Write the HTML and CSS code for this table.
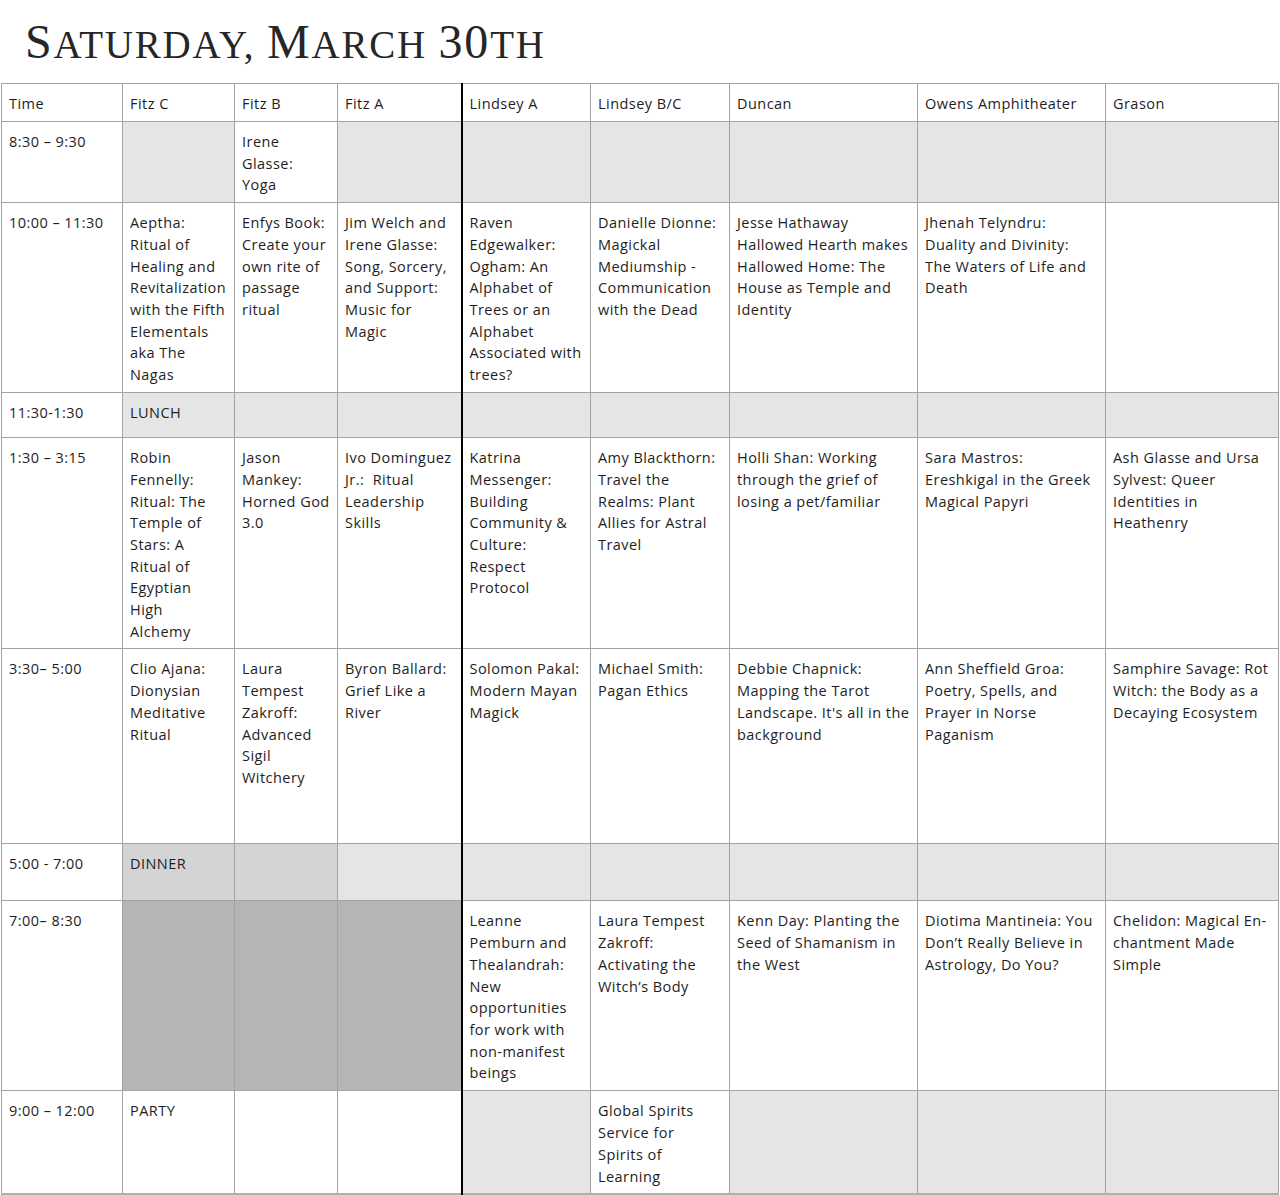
FILE: index.html
```html
<!DOCTYPE html>
<html lang="en">
<head>
<meta charset="utf-8">
<title>Saturday, March 30th</title>
<link rel="stylesheet" href="styles.css">
</head>
<body>
<div class="page">
  <h1 class="title"><span class="ini">S</span>aturday, <span class="ini">M</span>arch <span class="ini">30</span>th</h1>
  <table class="schedule">
    <colgroup>
      <col class="c-time"><col class="c-fitzc"><col class="c-fitzb"><col class="c-fitza">
      <col class="c-lina"><col class="c-linbc"><col class="c-duncan"><col class="c-owens"><col class="c-grason">
    </colgroup>
    <tr class="r-head">
      <td>Time</td><td>Fitz C</td><td>Fitz B</td><td>Fitz A</td>
      <td class="split">Lindsey A</td><td>Lindsey B/C</td><td>Duncan</td><td>Owens Amphitheater</td><td>Grason</td>
    </tr>
    <tr class="r-830">
      <td>8:30 – 9:30</td>
      <td class="g"></td>
      <td>Irene<br>Glasse:<br>Yoga</td>
      <td class="g"></td>
      <td class="split g"></td><td class="g"></td><td class="g"></td><td class="g"></td><td class="g"></td>
    </tr>
    <tr class="r-1000">
      <td>10:00 – 11:30</td>
      <td>Aeptha:<br>Ritual of<br>Healing and<br>Revitalization<br>with the Fifth<br>Elementals<br>aka The<br>Nagas</td>
      <td>Enfys Book:<br>Create your<br>own rite of<br>passage<br>ritual</td>
      <td>Jim Welch and<br>Irene Glasse:<br>Song, Sorcery,<br>and Support:<br>Music for<br>Magic</td>
      <td class="split">Raven<br>Edgewalker:<br>Ogham: An<br>Alphabet of<br>Trees or an<br>Alphabet<br>Associated with<br>trees?</td>
      <td>Danielle Dionne:<br>Magickal<br>Mediumship -<br>Communication<br>with the Dead</td>
      <td>Jesse Hathaway<br>Hallowed Hearth makes<br>Hallowed Home: The<br>House as Temple and<br>Identity</td>
      <td>Jhenah Telyndru:<br>Duality and Divinity:<br>The Waters of Life and<br>Death</td>
      <td></td>
    </tr>
    <tr class="r-lunch">
      <td>11:30-1:30</td>
      <td class="g">LUNCH</td>
      <td class="g"></td><td class="g"></td>
      <td class="split g"></td><td class="g"></td><td class="g"></td><td class="g"></td><td class="g"></td>
    </tr>
    <tr class="r-130">
      <td>1:30 – 3:15</td>
      <td>Robin<br>Fennelly:<br>Ritual: The<br>Temple of<br>Stars: A<br>Ritual of<br>Egyptian<br>High<br>Alchemy</td>
      <td>Jason<br>Mankey:<br>Horned God<br>3.0</td>
      <td>Ivo Dominguez<br>Jr.:&nbsp; Ritual<br>Leadership<br>Skills</td>
      <td class="split">Katrina<br>Messenger:<br>Building<br>Community &amp;<br>Culture:<br>Respect<br>Protocol</td>
      <td>Amy Blackthorn:<br>Travel the<br>Realms: Plant<br>Allies for Astral<br>Travel</td>
      <td>Holli Shan: Working<br>through the grief of<br>losing a pet/familiar</td>
      <td>Sara Mastros:<br>Ereshkigal in the Greek<br>Magical Papyri</td>
      <td>Ash Glasse and Ursa<br>Sylvest: Queer<br>Identities in<br>Heathenry</td>
    </tr>
    <tr class="r-330">
      <td>3:30– 5:00</td>
      <td>Clio Ajana:<br>Dionysian<br>Meditative<br>Ritual</td>
      <td>Laura<br>Tempest<br>Zakroff:<br>Advanced<br>Sigil<br>Witchery</td>
      <td>Byron Ballard:<br>Grief Like a<br>River</td>
      <td class="split">Solomon Pakal:<br>Modern Mayan<br>Magick</td>
      <td>Michael Smith:<br>Pagan Ethics</td>
      <td>Debbie Chapnick:<br>Mapping the Tarot<br>Landscape. It's all in the<br>background</td>
      <td>Ann Sheffield Groa:<br>Poetry, Spells, and<br>Prayer in Norse<br>Paganism</td>
      <td>Samphire Savage: Rot<br>Witch: the Body as a<br>Decaying Ecosystem</td>
    </tr>
    <tr class="r-500">
      <td>5:00 - 7:00</td>
      <td class="d">DINNER</td>
      <td class="d"></td>
      <td class="g"></td>
      <td class="split g"></td><td class="g"></td><td class="g"></td><td class="g"></td><td class="g"></td>
    </tr>
    <tr class="r-700">
      <td>7:00– 8:30</td>
      <td class="x"></td><td class="x"></td><td class="x"></td>
      <td class="split">Leanne<br>Pemburn and<br>Thealandrah:<br>New<br>opportunities<br>for work with<br>non-manifest<br>beings</td>
      <td>Laura Tempest<br>Zakroff:<br>Activating the<br>Witch’s Body</td>
      <td>Kenn Day: Planting the<br>Seed of Shamanism in<br>the West</td>
      <td>Diotima Mantineia: You<br>Don’t Really Believe in<br>Astrology, Do You?</td>
      <td>Chelidon: Magical En-<br>chantment Made<br>Simple</td>
    </tr>
    <tr class="r-900">
      <td>9:00 – 12:00</td>
      <td>PARTY</td>
      <td></td><td></td>
      <td class="split g"></td>
      <td>Global Spirits<br>Service for<br>Spirits of<br>Learning</td>
      <td class="g"></td><td class="g"></td><td class="g"></td>
    </tr>
  </table>
</div>
</body>
</html>
```

FILE: styles.css
```css
html, body {
  margin: 0;
  padding: 0;
  background: #ffffff;
}

.page {
  width: 1280px;
  padding: 0 1px;
  box-sizing: border-box;
}

.title {
  margin: 0;
  padding: 16px 0 0 24px;
  height: 83px;
  box-sizing: border-box;
  font-family: "Liberation Serif", "DejaVu Serif", serif;
  font-weight: normal;
  text-transform: uppercase;
  font-size: 39px;
  line-height: 52px;
  letter-spacing: 1.8px;
  color: #262626;
}

.title .ini {
  font-size: 48px;
}

.schedule {
  border-collapse: collapse;
  table-layout: fixed;
  width: 1277px;
  font-family: "Open Sans", "Noto Sans", sans-serif;
  font-size: 14.5px;
  letter-spacing: 0.45px;
  line-height: 21.7px;
  color: #1e1e1e;
  border-bottom: 2px solid #b0b0b0;
}

.schedule td {
  border: 1px solid #a3a3a3;
  padding: 9px 4px 6px 7px;
  vertical-align: top;
  background: #ffffff;
  white-space: nowrap;
}

.c-time { width: 121px; }
.c-fitzc { width: 112px; }
.c-fitzb { width: 103px; }
.c-fitza { width: 124px; }
.c-lina { width: 129px; }
.c-linbc { width: 139px; }
.c-duncan { width: 188px; }
.c-owens { width: 188px; }
.c-grason { width: 173px; }

.schedule td.split {
  border-left: 2px solid #000000;
}

.schedule td.g { background: #e5e5e5; }
.schedule td.d { background: #d4d4d4; }
.schedule td.x { background: #b5b5b5; }

.r-head td { height: 22px; }
.r-830 { height: 80px; }
.r-1000 { height: 190px; }
.r-lunch { height: 45px; }
.r-130 { height: 210px; }
.r-330 { height: 195px; }
.r-500 { height: 57px; }
.r-700 { height: 190px; }
.r-900 { height: 102px; }
```
